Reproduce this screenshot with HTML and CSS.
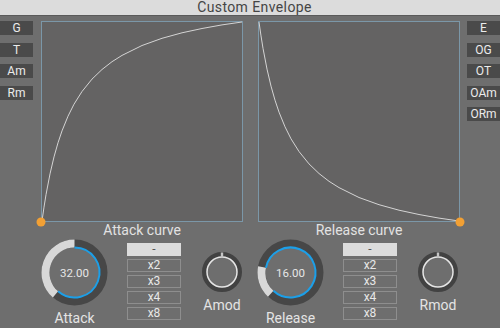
FILE: index.html
```html
<html>

<head>
  <link rel="stylesheet" href="styles.css">
</head>

<body>
  <div class="titlebar">Custom Envelope</div>

  <div class="main">
    <div class="side">
      <div class="side-btn">G</div>
      <div class="side-btn">T</div>
      <div class="side-btn">Am</div>
      <div class="side-btn">Rm</div>
    </div>

    <div class="panel">
      <div class="graph">
        <svg width="200" height="199" viewBox="0 0 200 199">
          <polyline class="curve" points="0,199 2,185.1 4,172.7 8,151.9 12,134.9 16,120.8 20,108.9 26,94.2 32,82.2 40,69.5 50,57.1 60,47.5 70,39.7 80,33.4 100,23.5 120,16.3 140,10.8 160,6.5 180,2.9 200,0" />
          <circle class="dot" cx="-1" cy="200" r="4.5" />
        </svg>
      </div>
      <div class="graph-label">Attack curve</div>
    </div>

    <div class="panel panel-right">
      <div class="graph">
        <svg width="200" height="199" viewBox="0 0 200 199">
          <polyline class="curve" points="0,0 2,13.9 4,26.3 8,47.1 12,64.1 16,78.2 20,90.1 26,104.8 32,116.8 40,129.5 50,141.9 60,151.5 70,159.3 80,165.6 100,175.5 120,182.7 140,188.2 160,192.5 180,196.1 200,199" />
          <circle class="dot" cx="201" cy="200" r="4.5" />
        </svg>
      </div>
      <div class="graph-label">Release curve</div>
    </div>

    <div class="side side-right">
      <div class="side-btn">E</div>
      <div class="side-btn">OG</div>
      <div class="side-btn">OT</div>
      <div class="side-btn">OAm</div>
      <div class="side-btn">ORm</div>
    </div>
  </div>

  <div class="controls">
    <!-- attack -->
    <div class="knob">
      <div class="dial">
        <svg width="67" height="67" viewBox="0 0 67 67">
          <circle class="ring" cx="33.5" cy="33.5" r="29" />
          <path class="range" d="M14.47,55.39 A29,29 0 0 1 33.5,4.5" />
          <path class="value" d="M33.5,8.5 A25,25 0 1 1 17.1,52.37" />
        </svg>
        <span class="dial-text">32.00</span>
      </div>
      <div class="knob-label">Attack</div>
    </div>

    <div class="mult">
      <div class="mult-btn active">-</div>
      <div class="mult-btn">x2</div>
      <div class="mult-btn">x3</div>
      <div class="mult-btn">x4</div>
      <div class="mult-btn">x8</div>
    </div>

    <div class="mod">
      <svg width="40" height="40" viewBox="0 0 40 40">
        <circle class="mod-ring" cx="20" cy="20" r="17.5" />
        <circle class="mod-line" cx="20" cy="20" r="15" />
        <rect class="mod-tick" x="18.8" y="0.5" width="2.4" height="5" />
      </svg>
      <div class="knob-label">Amod</div>
    </div>

    <!-- release -->
    <div class="knob knob-release">
      <div class="dial">
        <svg width="67" height="67" viewBox="0 0 67 67">
          <circle class="ring" cx="33.5" cy="33.5" r="29" />
          <path class="range" d="M13.72,54.71 A29,29 0 0 1 5.03,27.97" />
          <path class="value" d="M8.96,28.73 A25,25 0 1 1 16.45,51.78" />
        </svg>
        <span class="dial-text">16.00</span>
      </div>
      <div class="knob-label">Release</div>
    </div>

    <div class="mult">
      <div class="mult-btn active">-</div>
      <div class="mult-btn">x2</div>
      <div class="mult-btn">x3</div>
      <div class="mult-btn">x4</div>
      <div class="mult-btn">x8</div>
    </div>

    <div class="mod">
      <svg width="40" height="40" viewBox="0 0 40 40">
        <circle class="mod-ring" cx="20" cy="20" r="17.5" />
        <circle class="mod-line" cx="20" cy="20" r="15" />
        <rect class="mod-tick" x="18.8" y="0.5" width="2.4" height="5" />
      </svg>
      <div class="knob-label">Rmod</div>
    </div>
  </div>

</body>

</html>
```

FILE: styles.css
```css
body {
  margin: 0;
  width: 500px;
  height: 328px;
  overflow: hidden;
  background: #6e6e6e;
  font-family: Roboto, "Liberation Sans", sans-serif;
  color: #e4e4e4;
}

/* title */
.titlebar {
  height: 15px;
  line-height: 15px;
  padding-left: 9px;
  background: #dcdcdc;
  color: #454545;
  font-size: 14px;
  letter-spacing: 0.4px;
  text-align: center;
  border-bottom: 1px solid #5a5a5a;
}

.main {
  display: flex;
  margin-top: 5px;
}

/* side buttons */
.side {
  width: 33px;
  display: flex;
  flex-direction: column;
  gap: 7.5px;
}

.side-right {
  margin-left: 7px;
}

.side-btn {
  height: 14px;
  line-height: 14px;
  background: #4a4a4a;
  color: #ececec;
  font-size: 12px;
  text-align: center;
}

/* curve panels */
.panel {
  width: 202px;
  margin-left: 8px;
}

.panel-right {
  margin-left: 15px;
}

.graph {
  width: 202px;
  height: 201px;
  box-sizing: border-box;
  border: 1px solid #7b97a8;
  background: #646363;
}

.graph svg {
  display: block;
  overflow: visible;
}

.curve {
  fill: none;
  stroke: #d4d4d4;
  stroke-width: 1;
}

.dot {
  fill: #f2a034;
}

.graph-label {
  line-height: 16px;
  font-size: 14px;
  text-align: center;
  color: #e2e2e2;
}

/* bottom controls */
.controls {
  display: flex;
  align-items: flex-start;
  padding-left: 41px;
}

.knob {
  width: 67px;
  margin-top: 1px;
}

.knob-release {
  margin-left: 15px;
}

.dial {
  position: relative;
  height: 67px;
}

.dial svg {
  display: block;
}

.dial-text {
  position: absolute;
  left: 0;
  right: 0;
  top: 27px;
  line-height: 14px;
  font-size: 11.5px;
  text-align: center;
  color: #e6e6e6;
}

.ring {
  fill: none;
  stroke: #474747;
  stroke-width: 8;
}

.range {
  fill: none;
  stroke: #d8d8d8;
  stroke-width: 8;
}

.value {
  fill: none;
  stroke: #1c9fe8;
  stroke-width: 2;
}

.knob-label {
  margin-top: 4px;
  line-height: 16px;
  font-size: 14px;
  text-align: center;
  color: #e4e4e4;
}

/* multiplier buttons */
.mult {
  width: 54px;
  margin-left: 19px;
  margin-top: 5px;
  display: flex;
  flex-direction: column;
  gap: 3px;
}

.mult-btn {
  height: 13px;
  box-sizing: border-box;
  border: 1px solid #8e8e8e;
  line-height: 11px;
  font-size: 12px;
  text-align: center;
  color: #e8e8e8;
}

.mult-btn.active {
  background: #dcdcdc;
  border-color: #dcdcdc;
  color: #555;
}

/* mod knobs */
.mod {
  width: 40px;
  margin-left: 21px;
  margin-top: 14px;
}

.mod svg {
  display: block;
}

.mod .knob-label {
  margin-top: 5px;
}

.mod-ring {
  fill: none;
  stroke: #424242;
  stroke-width: 5;
}

.mod-line {
  fill: none;
  stroke: #e6e6e6;
  stroke-width: 1.5;
}

.mod-tick {
  fill: #c4c4c4;
}
```
